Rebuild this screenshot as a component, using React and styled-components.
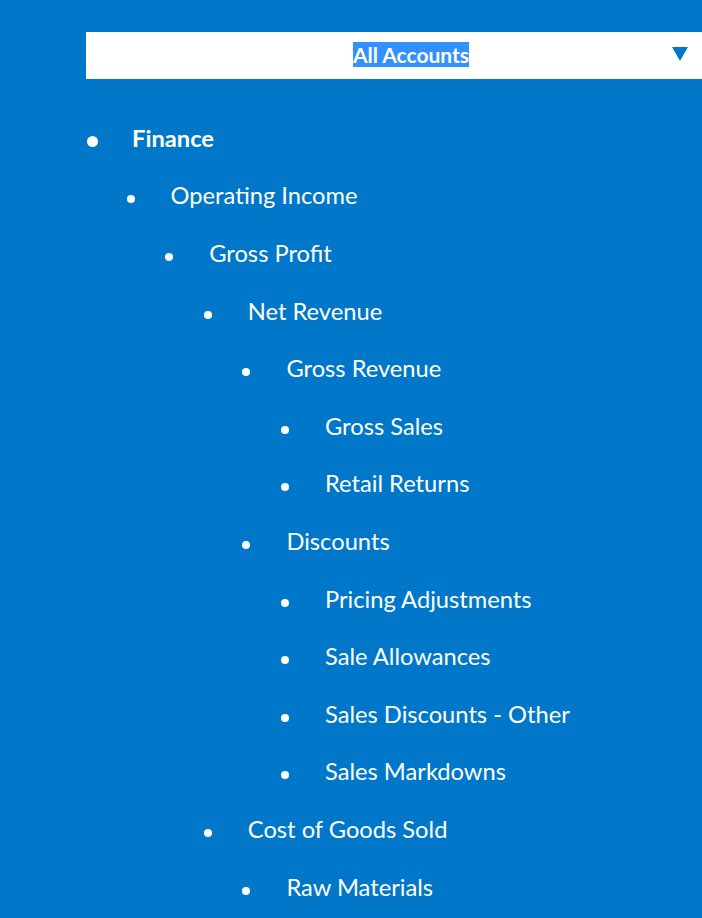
import React from 'react'
import styled, { createGlobalStyle } from 'styled-components'

const GlobalStyle = createGlobalStyle`
  html, body {
    margin: 0;
    padding: 0;
    background: #0077c8;
    overflow: hidden;
  }
  body {
    font-family: Lato, "Open Sans", sans-serif;
    color: #fff;
  }
`

const Page = styled.div`
  padding: 32px 0 0 86px;
  min-height: 918px;
  box-sizing: border-box;
`

const Select = styled.div`
  width: 650px;
  height: 47px;
  background: #fff;
  display: flex;
  align-items: center;
  justify-content: center;
  position: relative;
`

const Selected = styled.span`
  background: #3390ff;
  color: #fff;
  font-weight: 700;
  font-size: 21px;
  line-height: 25px;
  margin-top: -2px;
`

const Arrow = styled.span`
  position: absolute;
  right: 48px;
  top: 15px;
  width: 0;
  height: 0;
  border-left: 8px solid transparent;
  border-right: 8px solid transparent;
  border-top: 14px solid #0077c8;
`

const Tree = styled.ul`
  list-style: none;
  margin: 30px 0 0;
  padding: 0;
`

const Item = styled.li`
  display: flex;
  align-items: center;
  height: 57.6px;
  padding-left: ${p => p.$level * 38.6}px;
`

const Marker = styled.span`
  width: 46px;
  flex: none;
  display: flex;
  align-items: center;
`

const Dot = styled.span`
  width: ${p => (p.$big ? 11 : 8)}px;
  height: ${p => (p.$big ? 11 : 8)}px;
  margin-left: ${p => (p.$big ? 0.5 : 2)}px;
  border-radius: 50%;
  background: #fff;
  transform: translateY(4px);
`

const Label = styled.span`
  font-size: 23.7px;
  font-weight: ${p => (p.$bold ? 700 : 400)};
  white-space: nowrap;
`

// \u200C keeps the "ti" pair from turning into a ligature
const accounts = [
  ['Finance', 0],
  ['Opera\u200Cting Income', 1],
  ['Gross Profit', 2],
  ['Net Revenue', 3],
  ['Gross Revenue', 4],
  ['Gross Sales', 5],
  ['Retail Returns', 5],
  ['Discounts', 4],
  ['Pricing Adjustments', 5],
  ['Sale Allowances', 5],
  ['Sales Discounts - Other', 5],
  ['Sales Markdowns', 5],
  ['Cost of Goods Sold', 3],
  ['Raw Materials', 4],
]

const App = () => {
  return (
    <>
      <GlobalStyle />
      <Page>
        <Select>
          <Selected>All Accounts</Selected>
          <Arrow />
        </Select>
        <Tree>
          {accounts.map(([name, level]) => (
            <Item key={name} $level={level}>
              <Marker><Dot $big={level === 0} /></Marker>
              <Label $bold={level === 0}>{name}</Label>
            </Item>
          ))}
        </Tree>
      </Page>
    </>
  )
}

export default App
